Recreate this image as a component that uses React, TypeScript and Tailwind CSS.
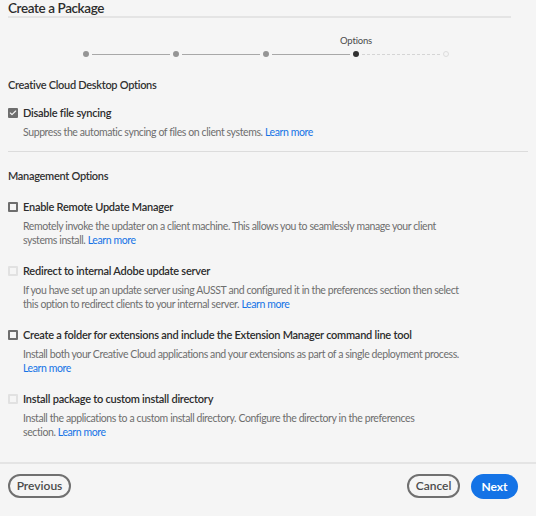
import { Check } from "lucide-react";

type Opt = {
  label: string;
  lines: string[];
  linkOnNewLine?: boolean;
  state: "checked" | "empty" | "disabled";
};

const mgmt: Opt[] = [
  {
    label: "Enable Remote Update Manager",
    lines: [
      "Remotely invoke the updater on a client machine. This allows you to seamlessly manage your client",
      "systems install.",
    ],
    state: "empty",
  },
  {
    label: "Redirect to internal Adobe update server",
    lines: [
      "If you have set up an update server using AUSST and configured it in the preferences section then select",
      "this option to redirect clients to your internal server.",
    ],
    state: "disabled",
  },
  {
    label: "Create a folder for extensions and include the Extension Manager command line tool",
    lines: ["Install both your Creative Cloud applications and your extensions as part of a single deployment process."],
    linkOnNewLine: true,
    state: "empty",
  },
  {
    label: "Install package to custom install directory",
    lines: [
      "Install the applications to a custom install directory. Configure the directory in the preferences",
      "section.",
    ],
    state: "disabled",
  },
];

function Box({ state }: { state: Opt["state"] }) {
  if (state === "checked")
    return (
      <span className="flex h-[10px] w-[10px] items-center justify-center rounded-[1px] bg-[#6e6e6e]">
        <Check size={8} strokeWidth={3.5} color="#f5f5f5" />
      </span>
    );
  if (state === "disabled")
    return <span className="h-[10px] w-[10px] rounded-[1px] border-2 border-[#e1e1e1]" />;
  return <span className="h-[10px] w-[10px] rounded-[1px] border-2 border-[#6e6e6e]" />;
}

function LearnMore() {
  return <span className="text-[#1473e6]">Learn more</span>;
}

function Option({ o }: { o: Opt }) {
  return (
    <div>
      <div className="flex h-[16px] items-center">
        <div className="flex w-[15px] shrink-0">
          <Box state={o.state} />
        </div>
        <span className="text-[11px] font-semibold tracking-[-0.25px] text-[#2c2c2c]">{o.label}</span>
      </div>
      <div className="mt-[4px] pl-[15px] text-[10.5px] leading-[14px] tracking-[-0.4px] text-[#6e6e6e]">
        {o.lines.map((l, i) => (
          <div key={i}>
            {l}
            {i === o.lines.length - 1 && !o.linkOnNewLine && (
              <>
                {" "}
                <LearnMore />
              </>
            )}
          </div>
        ))}
        {o.linkOnNewLine && (
          <div>
            <LearnMore />
          </div>
        )}
      </div>
    </div>
  );
}

function Stepper() {
  const steps = [0, 1, 2, 3, 4];
  return (
    <div className="ml-[75px] flex w-[366px] items-center">
      {steps.map((s) => (
        <div key={s} className="flex flex-1 items-center last:flex-none">
          <div className="relative">
            {s === 3 && (
              <span className="absolute bottom-[9px] left-1/2 -translate-x-1/2 text-[9.5px] tracking-[-0.2px] text-[#4b4b4b]">
                Options
              </span>
            )}
            <div
              className={
                s < 3
                  ? "h-[6px] w-[6px] rounded-full bg-[#959595]"
                  : s === 3
                  ? "h-[6px] w-[6px] rounded-full bg-[#323232]"
                  : "h-[6px] w-[6px] rounded-full border border-[#dcdcdc]"
              }
            />
          </div>
          {s < 3 && <div className="mx-[3px] h-px flex-1 bg-[#a8a8a8]" />}
          {s === 3 && <div className="mx-[3px] flex-1 border-t border-dashed border-[#d5d5d5]" />}
        </div>
      ))}
    </div>
  );
}

export default function App() {
  return (
    <div className="flex h-[516px] w-[536px] flex-col bg-[#f5f5f5] font-['Lato',sans-serif] text-[#2c2c2c]">
      <div className="flex-1 px-2">
        <h1 className="mr-[17px] border-b-2 border-[#e4e4e4] text-[13.5px] font-semibold leading-[16px] tracking-[-0.4px] text-[#2c2c2c]">
          Create a Package
        </h1>

        <div className="mt-[33px]">
          <Stepper />
        </div>

        <h2 className="mt-[20px] text-[11px] font-semibold leading-[16px] tracking-[-0.3px] text-[#323232]">
          Creative Cloud Desktop Options
        </h2>

        <div className="mt-[12px]">
          <Option
            o={{
              label: "Disable file syncing",
              lines: ["Suppress the automatic syncing of files on client systems."],
              state: "checked",
            }}
          />
        </div>

        <div className="mt-[12px] border-t border-[#dcdcdc]" />

        <h2 className="mt-[16px] text-[11px] font-semibold leading-[16px] tracking-[-0.3px] text-[#323232]">
          Management Options
        </h2>

        <div className="mt-[15px] flex flex-col gap-[16px]">
          {mgmt.map((o) => (
            <Option key={o.label} o={o} />
          ))}
        </div>
      </div>

      <div className="flex h-[54px] items-start justify-between border-t-2 border-[#e4e4e4] px-2 pt-[10px]">
        <button className="h-[24px] w-[63px] rounded-full border-2 border-[#707070] text-[12px] font-semibold text-[#4b4b4b]">
          Previous
        </button>
        <div className="mr-[10px] flex gap-[11px]">
          <button className="h-[24px] w-[53px] rounded-full border-2 border-[#707070] text-[12px] font-semibold text-[#4b4b4b]">
            Cancel
          </button>
          <button className="h-[25px] w-[47px] rounded-full bg-[#1473e6] text-[12px] font-bold text-white">
            Next
          </button>
        </div>
      </div>
    </div>
  );
}
